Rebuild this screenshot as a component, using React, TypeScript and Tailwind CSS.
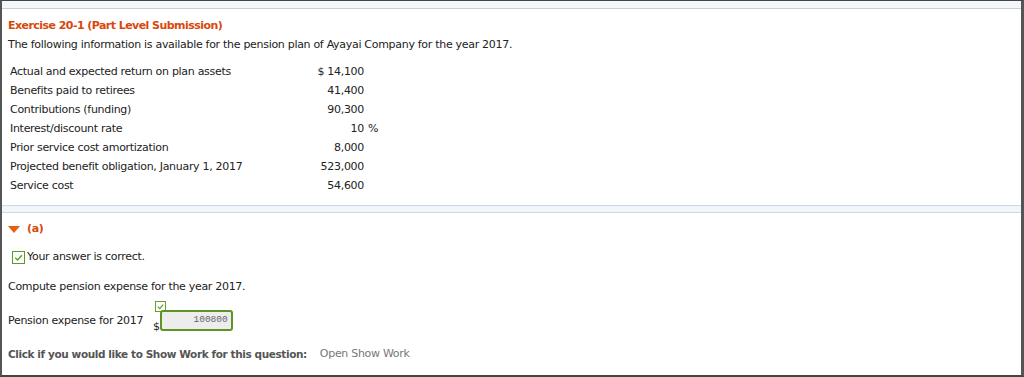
import React from 'react';

const rows: { label: string; value: string; suffix?: string }[] = [
  { label: 'Actual and expected return on plan assets', value: '$ 14,100' },
  { label: 'Benefits paid to retirees', value: '41,400' },
  { label: 'Contributions (funding)', value: '90,300' },
  { label: 'Interest/discount rate', value: '10', suffix: '%' },
  { label: 'Prior service cost amortization', value: '8,000' },
  { label: 'Projected benefit obligation, January 1, 2017', value: '523,000' },
  { label: 'Service cost', value: '54,600' },
];

const CheckIcon: React.FC<{ size: number }> = ({ size }) => (
  <svg width={size} height={size} viewBox="0 0 10 10">
    <path d="M2 5.2 L4.2 7.3 L8 3" fill="none" stroke="#5a9a2a" strokeWidth="1.3" />
  </svg>
);

export default function App() {
  return (
    <div className="h-[377px] w-[1024px] overflow-hidden bg-white font-['DejaVu_Sans',sans-serif] text-[11px] tracking-[-0.3px] text-[#222]">
      <div className="flex h-full flex-col border-t border-l-2 border-r-[3px] border-b-2 border-t-[#444] border-l-[#555] border-r-[#555] border-b-[#444]">
        <div className="h-[8px] border-b border-[#c6ced6] bg-[#f3f7fb]" />

        <div className="px-[6px] pt-[10px]">
          <h2 className="text-[11px] font-bold leading-[14px] tracking-[-0.55px] text-[#d8480c]">
            Exercise 20-1 (Part Level Submission)
          </h2>
          <p className="mt-[5px] leading-[14px]">
            The following information is available for the pension plan of Ayayai Company for the year 2017.
          </p>

          <table className="mt-[11px] ml-[2px] border-collapse">
            <tbody>
              {rows.map((r) => (
                <tr key={r.label} className="h-[19px]">
                  <td className="w-[300px] p-0 align-middle">{r.label}</td>
                  <td className="w-[54px] p-0 text-right align-middle">{r.value}</td>
                  <td className="w-[20px] p-0 pl-[4px] align-middle">{r.suffix ?? ''}</td>
                </tr>
              ))}
            </tbody>
          </table>
        </div>

        <div className="mt-[9px] h-[8px] border-y border-[#cdd8e4] bg-[#f1f6fb]" />

        <div className="px-[6px] pt-[9px]">
          <div className="flex items-center gap-[7px] leading-[14px]">
            <span className="h-0 w-0 border-x-[6px] border-t-[7px] border-x-transparent border-t-[#e8600c]" />
            <span className="font-bold text-[#d8480c]">(a)</span>
          </div>

          <div className="mt-[14px] ml-[4px] flex items-center gap-[2px] leading-[14px]">
            <span className="flex h-[13px] w-[13px] items-center justify-center border border-[#5a9a2a] bg-white">
              <CheckIcon size={11} />
            </span>
            <span>Your answer is correct.</span>
          </div>

          <p className="mt-[16px] leading-[14px]">Compute pension expense for the year 2017.</p>

          <div className="mt-[7px] flex items-center">
            <span className="mt-[9px] w-[145px] leading-[14px]">Pension expense for 2017</span>
            <div className="flex flex-col">
              <span className="ml-[2px] flex h-[11px] w-[11px] items-center justify-center border border-[#6a9c2c] bg-white">
                <CheckIcon size={9} />
              </span>
              <div className="-mt-[2px] flex items-end">
                <span className="mb-[-3px] leading-[14px]">$</span>
                <div className="flex h-[21px] w-[73px] items-center justify-end rounded-[3px] border-2 border-[#5e9424] bg-[#ededed] pr-[3px] font-['Liberation_Mono',monospace] text-[9.5px] tracking-normal text-[#666]">
                  100800
                </div>
              </div>
            </div>
          </div>

          <div className="mt-[16px] flex items-center leading-[14px]">
            <span className="text-[10.5px] font-bold tracking-[-0.4px] text-[#555]">
              Click if you would like to Show Work for this question:
            </span>
            <span className="ml-[13px] text-[#777]">Open Show Work</span>
          </div>
        </div>
      </div>
    </div>
  );
}
